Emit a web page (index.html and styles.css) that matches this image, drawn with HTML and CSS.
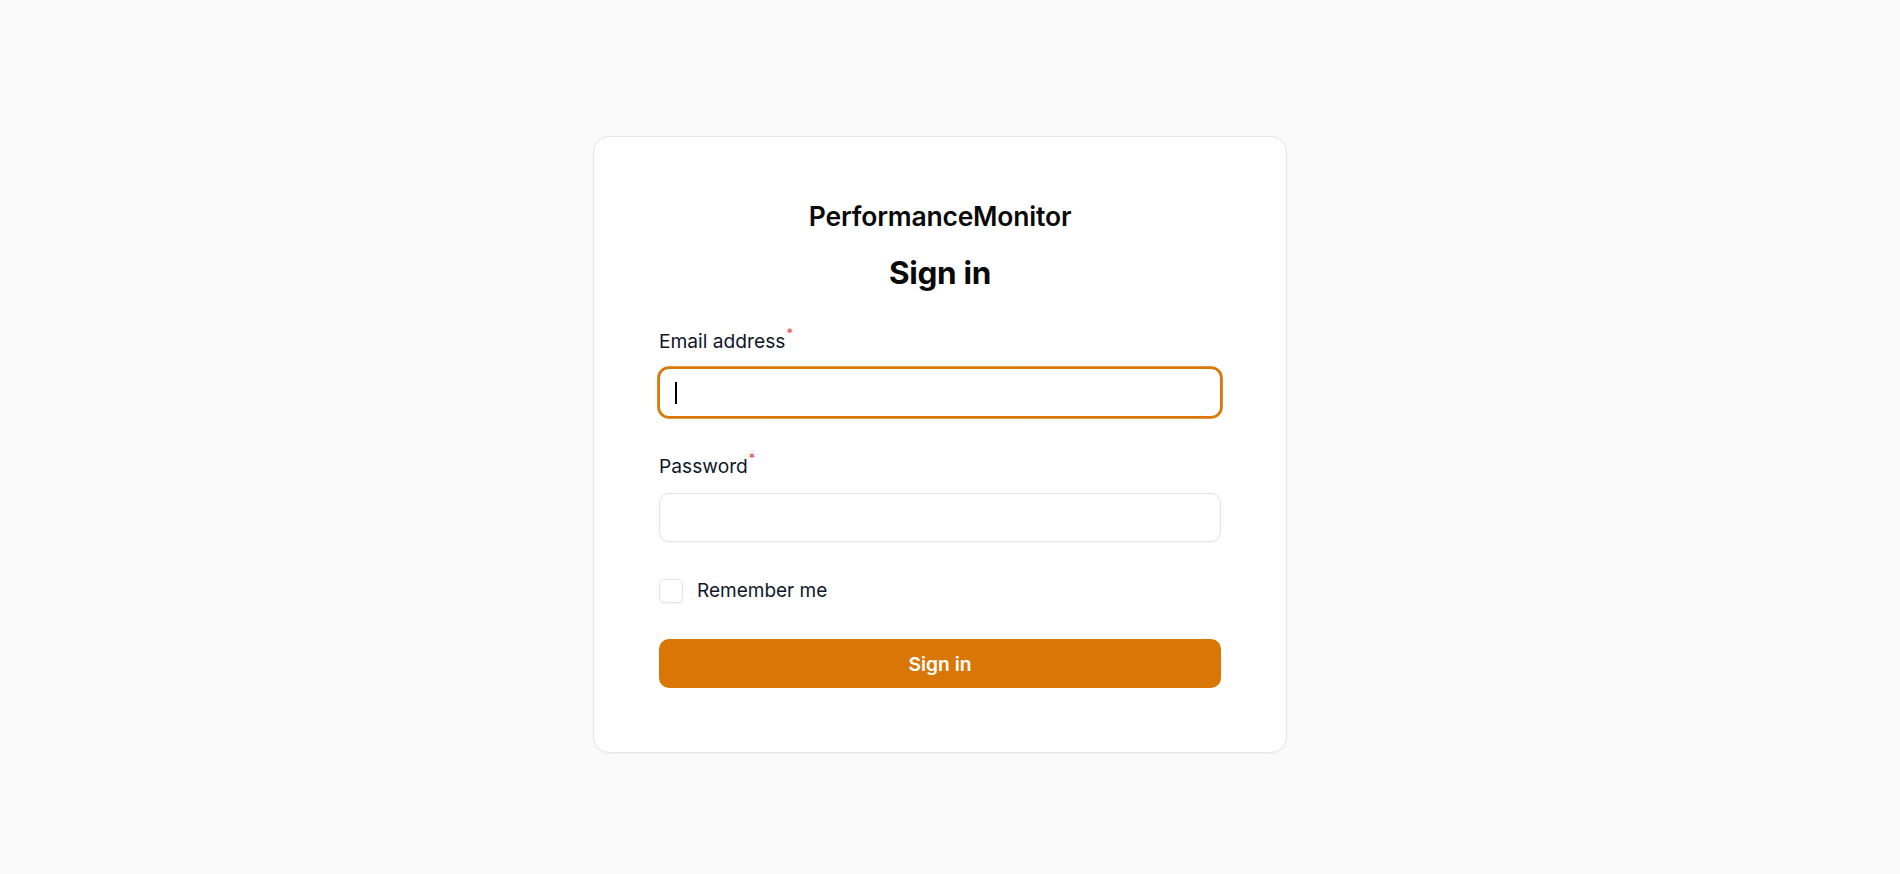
FILE: index.html
```html
<!DOCTYPE html>
<html lang="en">
<head>
<meta charset="utf-8">
<title>Sign in - PerformanceMonitor</title>
<link rel="stylesheet" href="styles.css">
</head>
<body>
<main class="page">
  <section class="card">
    <div class="brand">PerformanceMonitor</div>
    <h1 class="heading">Sign in</h1>
    <form class="form">
      <div class="field">
        <label class="label" for="email">Email address<span class="req">*</span></label>
        <div class="input-wrap">
          <input class="input input-focus" id="email" type="email" autofocus>
          <span class="caret" aria-hidden="true"></span>
        </div>
      </div>
      <div class="field field-next">
        <label class="label" for="password">Password<span class="req">*</span></label>
        <input class="input" id="password" type="password">
      </div>
      <label class="remember">
        <input class="checkbox" type="checkbox">
        <span class="remember-text">Remember me</span>
      </label>
      <button class="submit" type="button">Sign in</button>
    </form>
  </section>
</main>
</body>
</html>
```
FILE: styles.css
```css
* { box-sizing: border-box; }

html, body {
  margin: 0;
  padding: 0;
}

body {
  background: #fafafa;
  font-family: "Inter", "Liberation Sans", sans-serif;
  color: #111827;
  min-height: 100vh;
}

.page {
  display: flex;
  justify-content: center;
  align-items: flex-start;
  padding: 136px 20px 0 0;
}

.card {
  width: 694px;
  background: #ffffff;
  border: 1px solid #e5e5e5;
  border-radius: 16px;
  box-shadow: 0 1px 2px rgba(0, 0, 0, 0.04);
  padding: 63px 65px 64px;
}

.brand {
  text-align: center;
  font-size: 26.5px;
  line-height: 32px;
  font-weight: 600;
  color: #0a0a0a;
  letter-spacing: -0.2px;
}

.heading {
  margin: 23px 0 0;
  text-align: center;
  font-size: 31.5px;
  line-height: 36px;
  font-weight: 700;
  color: #0a0a0a;
  letter-spacing: -0.3px;
}

.form {
  margin-top: 36px;
  display: flex;
  flex-direction: column;
}

.field {
  display: flex;
  flex-direction: column;
}

.field-next {
  margin-top: 35px;
}

.label {
  font-size: 19.2px;
  line-height: 28px;
  font-weight: 400;
  color: #0f172a;
  margin-bottom: 13px;
}

.req {
  color: #ef4444;
  font-size: 13px;
  line-height: 1;
  vertical-align: top;
  margin-left: 1px;
}

.input-wrap {
  position: relative;
}

.input {
  display: block;
  height: 49px;
  width: 100%;
  border: 1px solid #e4e4e7;
  border-radius: 10px;
  background: #ffffff;
  padding: 0 15px;
  font-family: inherit;
  font-size: 19px;
  color: #111827;
  outline: none;
  box-shadow: 0 1px 2px rgba(0, 0, 0, 0.03);
}

.input-focus,
.input:focus {
  border-color: #d97706;
  box-shadow: 0 0 0 1.8px #d97706;
  caret-color: transparent;
}

.caret {
  position: absolute;
  left: 16px;
  top: 14px;
  width: 2px;
  height: 22px;
  background: #000000;
}

.remember {
  margin-top: 35px;
  display: flex;
  align-items: center;
  height: 28px;
  cursor: pointer;
}

.checkbox {
  appearance: none;
  -webkit-appearance: none;
  width: 24px;
  height: 24px;
  margin: 0 14px 0 0;
  border: 1px solid #e4e4e7;
  border-radius: 5px;
  background: #ffffff;
  box-shadow: 0 1px 2px rgba(0, 0, 0, 0.04);
  flex: none;
}

.remember-text {
  font-size: 19px;
  line-height: 28px;
  color: #0f172a;
}

.submit {
  margin-top: 34px;
  height: 49px;
  width: 100%;
  border: none;
  border-radius: 10px;
  background: #d97706;
  color: #ffffff;
  font-family: inherit;
  font-size: 19.2px;
  font-weight: 600;
  cursor: pointer;
}
```
